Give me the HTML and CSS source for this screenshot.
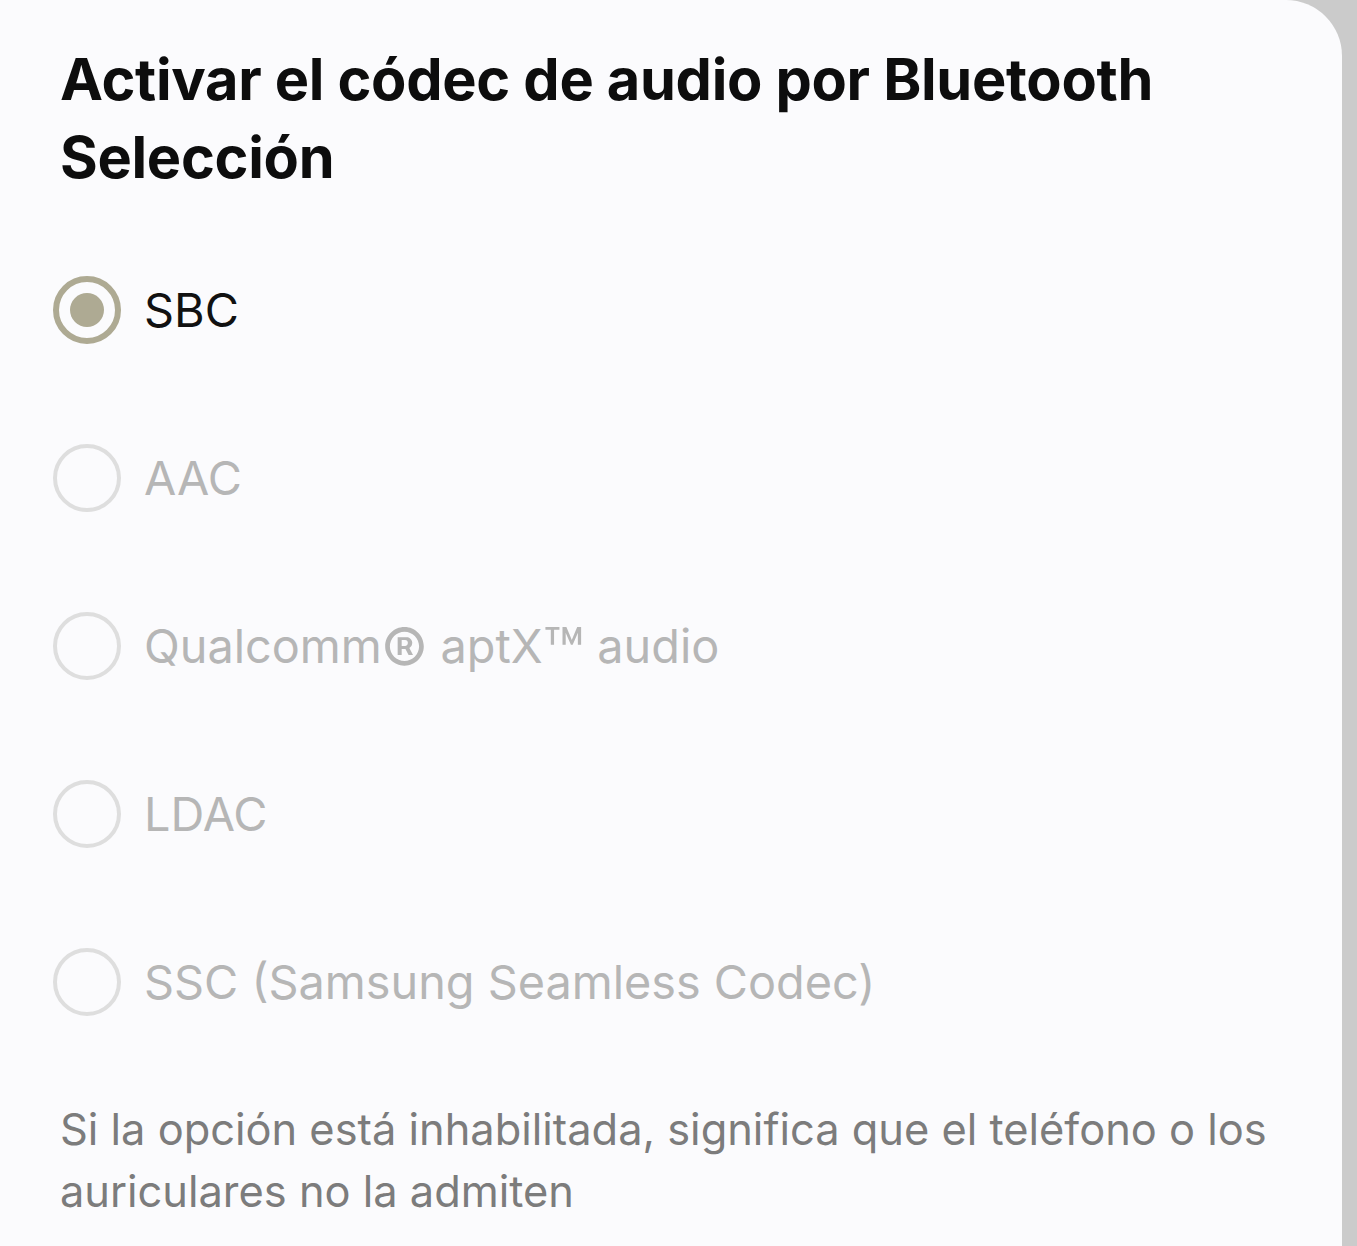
FILE: index.html
```html
<!DOCTYPE html>
<html lang="es">
<head>
<meta charset="utf-8">
<link rel="stylesheet" href="styles.css">
</head>
<body>
<div class="dialog">
  <h1 class="title">Activar el códec de audio por Bluetooth Selección</h1>
  <ul class="options">
    <li class="option checked"><span class="radio"></span><span class="label">SBC</span></li>
    <li class="option disabled"><span class="radio"></span><span class="label">AAC</span></li>
    <li class="option disabled"><span class="radio"></span><span class="label">Qualcomm<span class="sym reg">®</span> aptX<span class="sym tm">™</span> audio</span></li>
    <li class="option disabled"><span class="radio"></span><span class="label">LDAC</span></li>
    <li class="option disabled"><span class="radio"></span><span class="label">SSC (Samsung Seamless Codec)</span></li>
  </ul>
  <p class="note">Si la opción está inhabilitada, significa que el teléfono o los auriculares no la admiten</p>
</div>
</body>
</html>
```

FILE: styles.css
```css
html, body {
  margin: 0;
  padding: 0;
}
body {
  background: #cbcbcb;
  font-family: Inter, "Noto Sans", sans-serif;
  width: 1357px;
  height: 1246px;
  overflow: hidden;
}
.dialog {
  width: 1342px;
  height: 1246px;
  box-sizing: border-box;
  background: #fbfbfd;
  border-top-right-radius: 56px;
  padding: 40px 60px 0 60px;
}
.title {
  margin: 0;
  font-size: 57.7px;
  line-height: 78px;
  font-weight: 700;
  color: #0d0d0d;
  width: 1130px;
  letter-spacing: -0.3px;
}
.options {
  list-style: none;
  margin: 30px 0 0 -7px;
  padding: 0;
}
.option {
  height: 168px;
  display: flex;
  align-items: center;
  gap: 23px;
}
.radio {
  width: 68px;
  height: 68px;
  box-sizing: border-box;
  border-radius: 50%;
  display: flex;
  align-items: center;
  justify-content: center;
  flex: none;
}
.checked .radio {
  border: 6px solid #aeaa93;
}
.checked .radio::after {
  content: "";
  width: 34px;
  height: 34px;
  border-radius: 50%;
  background: #aeaa93;
}
.disabled .radio {
  border: 4px solid #dedede;
}
.label {
  font-size: 46.8px;
  font-weight: 400;
}
.sym {
  font-size: 1.45em;
  line-height: 0;
  position: relative;
}
.reg {
  top: 0.2em;
}
.tm {
  top: 0.19em;
}
.checked .label {
  color: #111111;
}
.disabled .label {
  color: #b6b6b6;
}
.note {
  margin: 32px 0 0 0;
  font-size: 43.4px;
  line-height: 62px;
  color: #7c7c7c;
  width: 1230px;
}
```
